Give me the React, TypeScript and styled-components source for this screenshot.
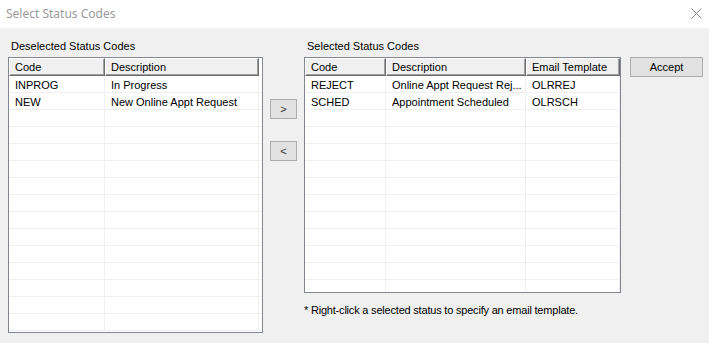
import React from "react";
import styled, { createGlobalStyle } from "styled-components";

const GlobalStyle = createGlobalStyle`
  html, body {
    margin: 0;
    padding: 0;
    background: #f0f0f0;
  }
  * { box-sizing: border-box; }
`;

interface Column {
  title: string;
  width: number;
}

interface ListProps {
  columns: Column[];
  rows: string[][];
  width: number;
  height: number;
  rowCount: number;
}

const Window = styled.div`
  width: 709px;
  height: 343px;
  background: #f0f0f0;
  font-family: "Liberation Sans", Arial, sans-serif;
  font-size: 11px;
  color: #000;
  display: flex;
  flex-direction: column;
  overflow: hidden;
`;

const TitleBar = styled.div`
  height: 28px;
  background: #fff;
  display: flex;
  align-items: center;
  justify-content: space-between;
  padding: 0 7px 2px 6px;
`;

const Title = styled.span`
  font-family: "Noto Sans", "Open Sans", sans-serif;
  font-size: 12px;
  color: #9a9a9a;
`;

const Body = styled.div`
  display: flex;
  padding: 11px 0 0 8px;
`;

const Group = styled.div`
  display: flex;
  flex-direction: column;
`;

const Label = styled.div`
  height: 18px;
  padding-left: 3px;
  line-height: 14px;
`;

const ListBox = styled.div<{ $w: number; $h: number }>`
  width: ${(p) => p.$w}px;
  height: ${(p) => p.$h}px;
  background: #fff;
  border: 1px solid #828790;
  overflow: hidden;
`;

const Header = styled.div`
  display: flex;
  height: 18px;
`;

const HeadCell = styled.div<{ $w: number }>`
  width: ${(p) => p.$w}px;
  height: 18px;
  flex: none;
  background: #f0f0f0;
  border-top: 1px solid #fff;
  border-left: 1px solid #fff;
  border-right: 1px solid #6d6d6d;
  border-bottom: 1px solid #6d6d6d;
  box-shadow: inset -1px -1px 0 #a0a0a0;
  padding-left: 5px;
  line-height: 16px;
  white-space: nowrap;
  overflow: hidden;
`;

const Row = styled.div`
  display: flex;
  height: 17px;
  border-bottom: 1px solid #f0f0f0;
`;

const Cell = styled.div<{ $w: number }>`
  width: ${(p) => p.$w}px;
  flex: none;
  border-right: 1px solid #f0f0f0;
  padding-left: 6px;
  line-height: 18px;
  white-space: nowrap;
  overflow: hidden;
`;

const Middle = styled.div`
  width: 41px;
  display: flex;
  flex-direction: column;
  align-items: center;
  padding-top: 60px;
  gap: 22px;
`;

const Button = styled.button<{ $w: number }>`
  width: ${(p) => p.$w}px;
  height: 20px;
  background: #e1e1e1;
  border: 1px solid #adadad;
  font-family: "Liberation Sans", Arial, sans-serif;
  font-size: 11px;
  color: #000;
  padding: 0 0 1px;
  margin: 0;
  cursor: pointer;
`;

const ArrowButton = styled(Button)`
  color: #333;
`;

const Side = styled.div`
  padding: 18px 0 0 9px;
`;

const Note = styled.div`
  margin-top: 11px;
  letter-spacing: -0.2px;
`;

const CloseIcon = () => (
  <svg width="11" height="11" viewBox="0 0 11 11">
    <path d="M0.5 0.5 L10.5 10.5 M10.5 0.5 L0.5 10.5" stroke="#8c8c8c" strokeWidth="1" fill="none" />
  </svg>
);

const StatusList = ({ columns, rows, width, height, rowCount }: ListProps) => {
  const last = width - 2 - columns.reduce((s, c) => s + c.width, 0);
  const blanks = Array.from({ length: rowCount - rows.length }, () => columns.map(() => ""));
  return (
    <ListBox $w={width} $h={height}>
      <Header>
        {columns.map((c) => (
          <HeadCell key={c.title} $w={c.width}>
            {c.title}
          </HeadCell>
        ))}
      </Header>
      {[...rows, ...blanks].map((r, i) => (
        <Row key={i}>
          {r.map((v, j) => (
            <Cell key={j} $w={columns[j].width}>
              {v}
            </Cell>
          ))}
          <div style={{ width: last }} />
        </Row>
      ))}
    </ListBox>
  );
};

const deselectedCols: Column[] = [
  { title: "Code", width: 96 },
  { title: "Description", width: 154 },
];

const selectedCols: Column[] = [
  { title: "Code", width: 81 },
  { title: "Description", width: 140 },
  { title: "Email Template", width: 94 },
];

export default function App() {
  return (
    <>
      <GlobalStyle />
      <Window>
        <TitleBar>
          <Title>Select Status Codes</Title>
          <CloseIcon />
        </TitleBar>
        <Body>
          <Group>
            <Label>Deselected Status Codes</Label>
            <StatusList
              columns={deselectedCols}
              rows={[
                ["INPROG", "In Progress"],
                ["NEW", "New Online Appt Request"],
              ]}
              width={255}
              height={276}
              rowCount={15}
            />
          </Group>
          <Middle>
            <ArrowButton $w={27}>&gt;</ArrowButton>
            <ArrowButton $w={27}>&lt;</ArrowButton>
          </Middle>
          <Group>
            <Label>Selected Status Codes</Label>
            <StatusList
              columns={selectedCols}
              rows={[
                ["REJECT", "Online Appt Request Rej...", "OLRREJ"],
                ["SCHED", "Appointment Scheduled", "OLRSCH"],
              ]}
              width={317}
              height={236}
              rowCount={13}
            />
            <Note>* Right-click a selected status to specify an email template.</Note>
          </Group>
          <Side>
            <Button $w={73}>Accept</Button>
          </Side>
        </Body>
      </Window>
    </>
  );
}
